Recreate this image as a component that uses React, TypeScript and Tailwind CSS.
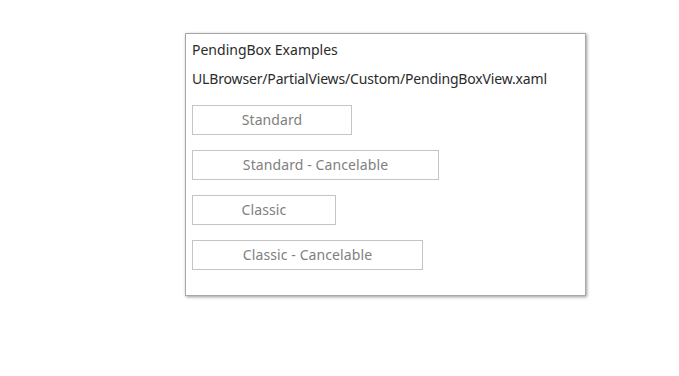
import type { ReactNode } from "react";

const BUTTONS = [
  { label: "Standard", width: "w-[160px]" },
  { label: "Standard - Cancelable", width: "w-[247px]" },
  { label: "Classic", width: "w-[144px]" },
  { label: "Classic - Cancelable", width: "w-[231px]" },
];

export default function App(): ReactNode {
  return (
    <div
      className="w-[679px] h-[376px] bg-white"
      style={{ fontFamily: '"Noto Sans", "Open Sans", sans-serif' }}
    >
      <div className="ml-[185px] pt-[33px]">
        <div className="w-[401px] h-[263px] border border-[#a8a8a8] shadow-[1px_1px_3px_rgba(0,0,0,0.4)] pl-[6px] pt-[6px] flex flex-col">
          <div className="text-[14px] leading-[19px] text-[#2b2b2b] h-[19px]">PendingBox Examples</div>
          <div className="text-[14px] leading-[19px] text-[#2b2b2b] mt-[10px] tracking-[-0.16px]">
            ULBrowser/PartialViews/Custom/PendingBoxView.xaml
          </div>
          <div className="flex flex-col items-start gap-[15px] mt-[17px]">
            {BUTTONS.map((b) => (
              <button
                key={b.label}
                className={`${b.width} h-[30px] border border-[#c4c4c4] bg-white text-[14px] text-[#808080] leading-none tracking-[0.1px] text-center`}
              >
                {b.label}
              </button>
            ))}
          </div>
        </div>
      </div>
    </div>
  );
}
